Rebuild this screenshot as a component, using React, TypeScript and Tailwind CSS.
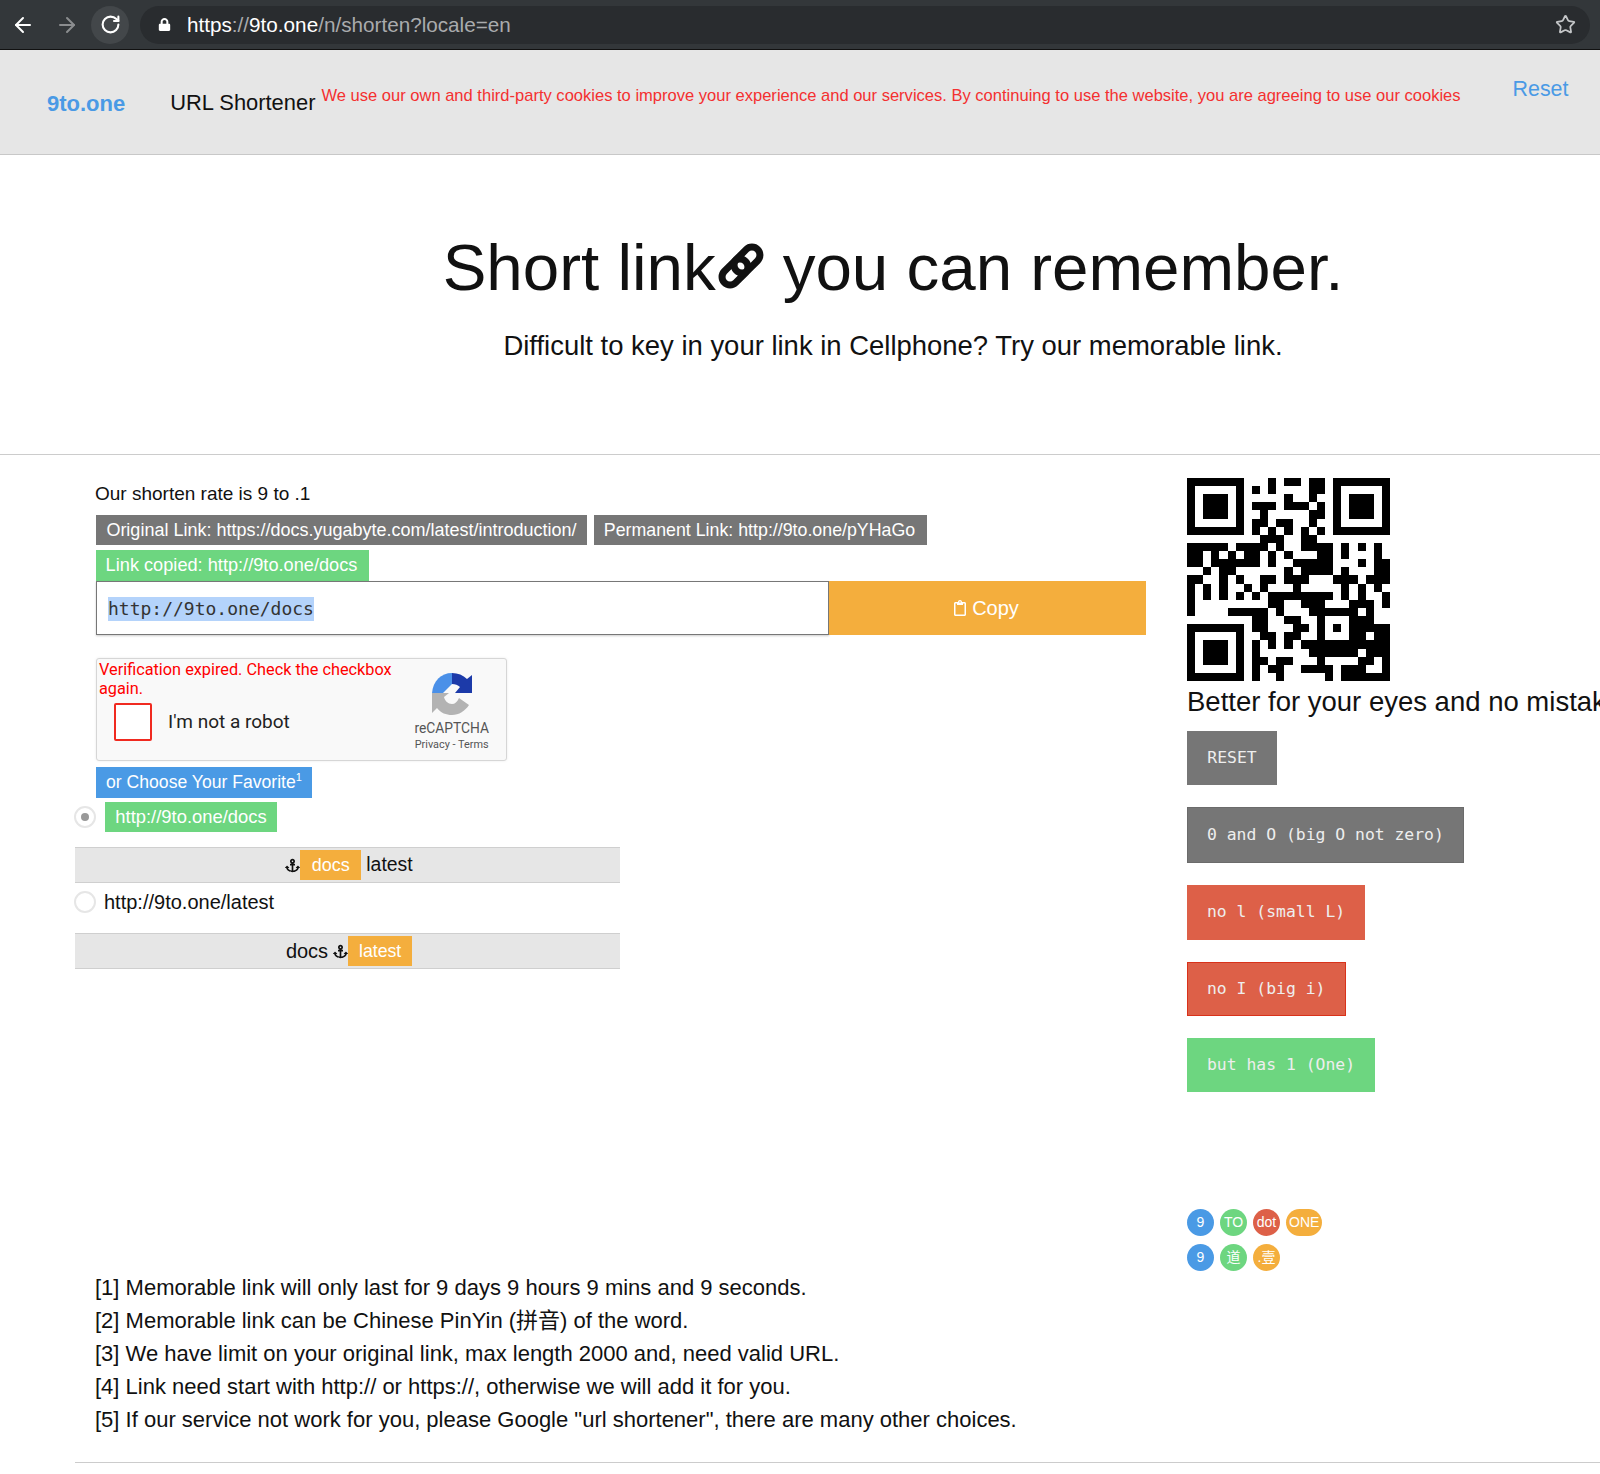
import { ArrowLeft, ArrowRight, RotateCw, Star } from 'lucide-react'
import { FaLock, FaAnchor, FaRegClipboard } from 'react-icons/fa'

const sans = "font-['Liberation_Sans','Noto_Sans_CJK_SC',sans-serif]"
const mono = "font-['DejaVu_Sans_Mono',monospace]"

const qrRows = [
  '#######...#.##.##.#######',
  '#.....#.#.#....##.#.....#',
  '#.###.#.....#..#..#.###.#',
  '#.###.#.###.###.#.#.###.#',
  '#.###.#..#.....##.#.###.#',
  '#.....#.##.##..#..#.....#',
  '#######.#.#.#.#.#.#######',
  '.........###..##.........',
  '#####.####.#..####.#.#.#.',
  '##.#.#.##.#.#...##.#...#.',
  '##.######.#..#####...#.##',
  '..#.##......#.####.#...##',
  '##..#.#..##.###...###.###',
  '#.#.#..#.#...#.....#.#.#.',
  '#.#.#.#.#.########.#.#..#',
  '#.........##..###...###.#',
  '#....#####.#...######.#..',
  '........##..##..#...###..',
  '#######.##...##.#.#.#####',
  '#.....#..##.##..#...##.##',
  '#.###.#.#.#.#.###########',
  '#.###.#.#......######.###',
  '#.###.#.##.##...#....##.#',
  '#.....#.#.##..####.###..#',
  '#######.#..#.....#.######',
]

const rules = [
  { text: '0 and O (big O not zero)', className: 'bg-[#767676] border-[#6b6b6b] w-[277px] h-[56px]' },
  { text: 'no l (small L)', className: 'bg-[#dd6048] border-[#dd6048] w-[178px] h-[55px]' },
  { text: 'no I (big i)', className: 'bg-[#dd6048] border-[#d9321a] w-[159px] h-[54px]' },
  { text: 'but has 1 (One)', className: 'bg-[#6dd680] border-[#6dd680] w-[188px] h-[54px]' },
]

const notes = [
  '[1] Memorable link will only last for 9 days 9 hours 9 mins and 9 seconds.',
  '[2] Memorable link can be Chinese PinYin (拼音) of the word.',
  '[3] We have limit on your original link, max length 2000 and, need valid URL.',
  '[4] Link need start with http:// or https://, otherwise we will add it for you.',
  '[5] If our service not work for you, please Google "url shortener", there are many other choices.',
]

const QrCode = () => (
  <svg width="203" height="203" viewBox="0 0 25 25" shapeRendering="crispEdges">
    {qrRows.map((row, y) =>
      row.split('').map((c, x) => (c === '#' ? <rect key={`${x}-${y}`} x={x} y={y} width="1" height="1" fill="#000" /> : null))
    )}
  </svg>
)

const ChainIcon = () => (
  <svg width="46" height="46" viewBox="0 0 46 46" fill="none" stroke="#111" strokeWidth="7" className="mt-[-4px] mr-[19px] ml-[2px] shrink-0">
    <rect x="2" y="21" width="30" height="16" rx="8" transform="rotate(-45 17 29)" />
    <rect x="14" y="9" width="30" height="16" rx="8" transform="rotate(-45 29 17)" />
  </svg>
)

const RecaptchaLogo = () => (
  <svg width="42" height="42" viewBox="0 0 42 42" fill="none">
    <path d="M21 0 C10 0 2 8 1 20 L12 20 L17 15 L21 11 Z" fill="#4a90e8" />
    <path d="M21 0 C27 0 32 2 36 6 L41 2 L41 20 L24 20 L29 14 C27 12 24 11 21 11 Z" fill="#1c3aa9" />
    <path d="M1 20 L1 40 L6 35 C10 40 15 42 21 42 C28 42 34 38 38 32 L28 25 C26 29 24 31 21 31 C17 31 14 28 13 24 L18 20 Z" fill="#b3b3b3" />
  </svg>
)

const Radio = ({ checked }: { checked?: boolean }) => (
  <span className="ml-[-1px] flex h-[22px] w-[22px] shrink-0 items-center justify-center rounded-full border-2 border-[#e6e6e6] bg-white">
    {checked && <span className="h-2 w-2 rounded-full bg-[#999]" />}
  </span>
)

const Bubble = ({ text, className }: { text: string; className: string }) => (
  <span className={`flex h-[27px] min-w-[27px] items-center justify-center rounded-full px-[3px] text-[14px] text-white ${className}`}>{text}</span>
)

export default function App() {
  return (
    <div className={`h-[1474px] w-[1600px] overflow-hidden bg-white text-[#111] ${sans}`}>
      {/* Browser bar */}
      <div className="flex h-[50px] items-center border-b border-[#111] bg-[#33373a] pl-[11px] pr-[10px]">
        <ArrowLeft size={24} className="text-white" />
        <ArrowRight size={24} className="ml-[20px] text-[#8b8d8f]" />
        <div className="ml-[12px] flex h-[38px] w-[38px] items-center justify-center rounded-full bg-[#43474a]">
          <RotateCw size={21} strokeWidth={2.4} className="text-white" />
        </div>
        <div className="ml-[11px] flex h-[38px] flex-1 items-center rounded-full bg-[#292c2f] pl-[18px] pr-[14px]">
          <FaLock size={13} className="text-white" />
          <div className="ml-[16px] text-[20.7px] text-[#a9abad]">
            <span className="text-white">https</span>://<span className="text-white">9to.one</span>/n/shorten?locale=en
          </div>
          <Star size={21} className="ml-auto text-[#c4c6c8]" />
        </div>
      </div>

      {/* Nav */}
      <div className="flex h-[105px] items-center border-b border-[#c8c8c8] bg-[#e6e6e6] pl-[47px]">
        <div className="mt-[2px] text-[22px] font-bold text-[#4a9ae5]">9to.one</div>
        <div className="ml-[45px] mt-[2px] text-[21.9px]">URL Shortener</div>
        <div className="ml-[6px] mb-[12px] text-[16.54px] text-[#f43030]">
          We use our own and third-party cookies to improve your experience and our services. By continuing to use the website, you are agreeing to use our cookies
        </div>
        <div className="ml-[52px] mb-[26px] text-[21.4px] text-[#4a9ae5]">Reset</div>
      </div>

      {/* Hero */}
      <div className="flex h-[300px] flex-col items-center border-b border-[#ccc] pl-[186px] pt-[71px]">
        <h1 className="flex items-center text-[65.5px] leading-[84px] font-normal">
          Short link
          <ChainIcon />
          you can remember.
        </h1>
        <p className="mt-[18px] text-[27.46px] leading-[36px]">Difficult to key in your link in Cellphone? Try our memorable link.</p>
      </div>

      {/* Main */}
      <div className="flex pl-[75px]">
        <div className="w-[1112px] shrink-0">
          <div className="pl-[20px]">
            <div className="pt-[27px] text-[19px] leading-[24px]">Our shorten rate is 9 to .1</div>
            <div className="mt-[9px] flex gap-[7px] pl-[1px] text-[18px] text-white">
              <span className="flex h-[30px] w-[491px] items-center justify-center bg-[#767676]">Original Link: https://docs.yugabyte.com/latest/introduction/</span>
              <span className="flex h-[30px] w-[333px] items-center justify-center bg-[#767676] pr-[2px] text-[17.8px]">Permanent Link: http://9to.one/pYHaGo</span>
            </div>
            <div className="mt-[5px] ml-[1px] flex h-[31px] w-[273px] items-center justify-center bg-[#6dd680] pr-[2px] text-[18.2px] text-white">Link copied: http://9to.one/docs</div>
            <div className="ml-[1px] flex h-[54px] w-[1050px]">
              <div className="flex w-[733px] items-center border border-[#777] bg-white pl-[11px] shadow-[0_1px_2px_rgba(0,0,0,0.2)]">
                <span className={`mt-[1px] bg-[#b4d3fb] text-[18px] leading-[24px] text-[#333] ${mono}`}>http://9to.one/docs</span>
              </div>
              <div className="flex flex-1 items-center justify-center gap-[4px] bg-[#f4ae3d] pr-[4px] text-[20px] text-white">
                <FaRegClipboard size={16} />
                Copy
              </div>
            </div>

            {/* reCAPTCHA */}
            <div className="relative ml-[1px] mt-[23px] h-[103px] w-[411px] rounded-[3px] border border-[#d6d6d6] bg-[#f9f9f9] font-['Roboto',sans-serif] shadow-[0_0_3px_rgba(0,0,0,0.08)]">
              <div className="w-[300px] pl-[2px] pt-[1px] text-[16.3px] leading-[19px] text-[#ff0000]">Verification expired. Check the checkbox again.</div>
              <div className="mt-[5px] flex items-center pl-[17px]">
                <span className="h-[38px] w-[38px] rounded-[2px] border-2 border-[#f02a20] bg-white" />
                <span className="ml-[16px] text-[19px] text-[#222]">I&apos;m not a robot</span>
              </div>
              <div className="absolute right-[17px] top-[14px] flex flex-col items-center">
                <RecaptchaLogo />
                <span className="mt-[5px] text-[13.8px] leading-[16px] text-[#555]">reCAPTCHA</span>
                <span className="mt-[2px] text-[10.9px] leading-[14px] text-[#555]">Privacy - Terms</span>
              </div>
            </div>

            <div className="ml-[1px] mt-[6px] flex h-[31px] w-[216px] items-center justify-center bg-[#4a9ae5] text-[17.6px] text-white">
              or Choose Your Favorite<sup className="text-[11px]">1</sup>
            </div>
          </div>

          <div className="mt-[4px] flex h-[30px] items-center">
            <Radio checked />
            <span className="ml-[9px] flex h-[30px] w-[172px] items-center justify-center bg-[#6dd680] text-[18.4px] text-white">http://9to.one/docs</span>
          </div>
          <div className="mt-[15px] flex h-[36px] w-[545px] items-center justify-center border-y border-[#cfcfcf] bg-[#e6e6e6] pl-[3px] text-[19.4px]">
            <FaAnchor size={15} />
            <span className="flex h-[30px] w-[61px] items-center justify-center bg-[#f4ae3d] text-[18px] text-white">docs</span>
            <span className="ml-[5px]">latest</span>
          </div>
          <div className="mt-[7px] flex h-[24px] items-center">
            <Radio />
            <span className="ml-[8px] text-[20px]">http://9to.one/latest</span>
          </div>
          <div className="mt-[19px] flex h-[36px] w-[545px] items-center justify-center border-y border-[#cfcfcf] bg-[#e6e6e6] pl-[3px] text-[20px]">
            <span className="mr-[5px]">docs</span>
            <FaAnchor size={15} />
            <span className="flex h-[30px] w-[64px] items-center justify-center bg-[#f4ae3d] text-[17.7px] text-white">latest</span>
          </div>

          {/* Footnotes */}
          <div className="mt-[302px] pl-[20px] text-[22px] leading-[33px]">
            {notes.map((note) => (
              <div key={note}>{note}</div>
            ))}
          </div>
        </div>

        <div className="whitespace-nowrap pt-[23px]">
          <QrCode />
          <div className="mt-[3px] text-[27.5px] leading-[36px]">Better for your eyes and no mistakes</div>
          <div className={`text-[16.4px] text-[#eee] ${mono}`}>
            <div className="mt-[11px] flex h-[54px] w-[90px] items-center justify-center bg-[#767676]">RESET</div>
            {rules.map((rule) => (
              <div key={rule.text} className={`mt-[22px] flex items-center border pl-[19px] ${rule.className}`}>
                {rule.text}
              </div>
            ))}
          </div>
          <div className="mt-[117px] flex gap-[6px]">
            <Bubble text="9" className="bg-[#4a9ae5]" />
            <Bubble text="TO" className="bg-[#6dd680]" />
            <Bubble text="dot" className="bg-[#dd6048]" />
            <Bubble text="ONE" className="bg-[#f4ae3d]" />
          </div>
          <div className="mt-[8px] flex gap-[6px]">
            <Bubble text="9" className="bg-[#4a9ae5]" />
            <Bubble text="道" className="bg-[#6dd680]" />
            <Bubble text=".壹" className="bg-[#f4ae3d]" />
          </div>
        </div>
      </div>

      <div className="ml-[75px] mt-[26px] border-t border-[#ccc]" />
    </div>
  )
}
